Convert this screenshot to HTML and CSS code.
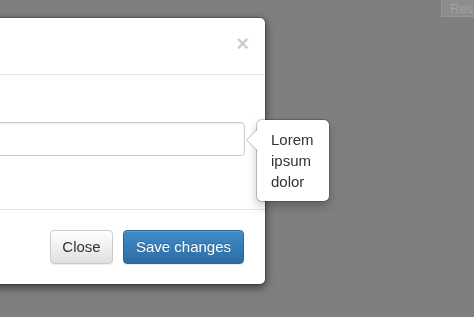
FILE: index.html
```html
<!DOCTYPE html>
<html>
<head>
<meta charset="utf-8">
<link rel="stylesheet" href="styles.css">
</head>
<body>
<div class="backdrop"></div>
<div class="topbar">
  <button class="reset-btn" type="button">Reset</button>
</div>
<div class="modal-content">
  <div class="modal-header">
    <button class="close" type="button">&times;</button>
    <h4 class="modal-title">Modal title</h4>
  </div>
  <div class="modal-body">
    <label class="field-label">Name</label>
    <input class="form-control" type="text">
  </div>
  <div class="modal-footer">
    <button class="btn btn-default" type="button">Close</button>
    <button class="btn btn-primary" type="button">Save changes</button>
  </div>
</div>
<div class="popover">
  <div class="arrow"></div>
  <div class="popover-content">Lorem ipsum dolor</div>
</div>
</body>
</html>
```
FILE: styles.css
```css
html, body {
  margin: 0;
  padding: 0;
  width: 474px;
  height: 317px;
  overflow: hidden;
  font-family: "Liberation Sans", Arial, sans-serif;
  font-size: 15px;
  line-height: 20px;
  color: #333;
  background: #ffffff;
}
.backdrop {
  position: fixed;
  inset: 0;
  background: rgba(0, 0, 0, 0.5);
}
.topbar {
  position: absolute;
  top: 0;
  right: 0;
  display: flex;
  justify-content: flex-end;
}
.reset-btn {
  margin: 0 -12px 0 0;
  width: 45px;
  height: 17px;
  padding: 0 0 0 8px;
  text-align: left;
  font-family: "Liberation Sans", Arial, sans-serif;
  font-size: 13px;
  line-height: 15px;
  color: #a2a2a2;
  background: #8d8d8d;
  border: 1px solid #959595;
  border-top: 0;
}
.modal-content {
  position: absolute;
  left: -334px;
  top: 17px;
  width: 598px;
  background: #fff;
  border: 1px solid rgba(0, 0, 0, 0.2);
  border-radius: 6px;
  box-shadow: 0 3px 9px rgba(0, 0, 0, 0.5);
  background-clip: padding-box;
}
.modal-header {
  padding: 15px;
  border-bottom: 1px solid #e5e5e5;
}
.close {
  float: right;
  margin-top: 0;
  margin-right: 1px;
  padding: 0;
  border: 0;
  background: transparent;
  font-family: "Liberation Sans", Arial, sans-serif;
  font-size: 22px;
  font-weight: bold;
  line-height: 1;
  color: #000;
  opacity: 0.2;
}
.modal-title {
  margin: 0;
  font-size: 18px;
  font-weight: 500;
  line-height: 26px;
}
.modal-body {
  padding: 20px 20px 53px;
}
.field-label {
  display: block;
  font-weight: bold;
  margin-bottom: 7px;
}
.form-control {
  display: block;
  box-sizing: border-box;
  width: 100%;
  height: 34px;
  margin: 0;
  padding: 6px 12px;
  font-size: 15px;
  color: #555;
  background: #fff;
  border: 1px solid #ccc;
  border-radius: 4px;
  box-shadow: inset 0 1px 1px rgba(0, 0, 0, 0.075);
  outline: none;
}
.modal-footer {
  padding: 20px 21px 20px 20px;
  border-top: 1px solid #e5e5e5;
  display: flex;
  justify-content: flex-end;
  gap: 10px;
}
.btn {
  box-sizing: border-box;
  height: 34px;
  margin: 0;
  padding: 6px 0;
  text-align: center;
  font-family: "Liberation Sans", Arial, sans-serif;
  font-size: 15px;
  line-height: 20px;
  border: 1px solid transparent;
  border-radius: 4px;
  box-shadow: inset 0 1px 0 rgba(255, 255, 255, 0.15), 0 1px 1px rgba(0, 0, 0, 0.075);
}
.btn-default {
  width: 63px;
  color: #333;
  background: linear-gradient(#ffffff, #e0e0e0);
  border-color: #ccc;
}
.btn-primary {
  width: 121px;
  color: #fff;
  background: linear-gradient(#428bca, #2d6ca2);
  border-color: #2b669a;
  text-shadow: 0 -1px 0 rgba(0, 0, 0, 0.2);
}
.popover {
  position: absolute;
  left: 256px;
  top: 119px;
  width: 72px;
  background: #fff;
  border: 1px solid rgba(0, 0, 0, 0.2);
  border-radius: 6px;
  box-shadow: 0 5px 10px rgba(0, 0, 0, 0.2);
  background-clip: padding-box;
}
.popover-content {
  padding: 9px 10px 9px 14px;
  line-height: 21px;
  color: #333;
}
.arrow {
  position: absolute;
  left: -11px;
  top: 9px;
  width: 0;
  height: 0;
  border-style: solid;
  border-width: 11px 11px 11px 0;
  border-color: transparent rgba(0, 0, 0, 0.25) transparent transparent;
}
.arrow::after {
  content: "";
  position: absolute;
  left: 1px;
  top: -10px;
  width: 0;
  height: 0;
  border-style: solid;
  border-width: 10px 10px 10px 0;
  border-color: transparent #fff transparent transparent;
}
```
